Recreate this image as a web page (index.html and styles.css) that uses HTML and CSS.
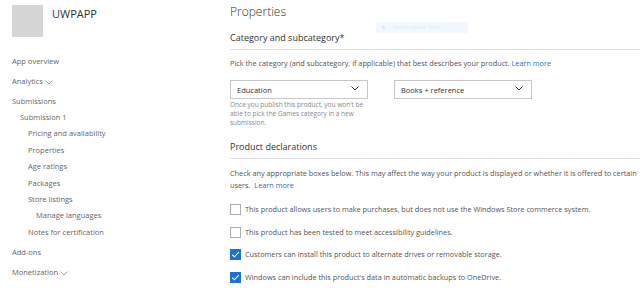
FILE: index.html
```html
<!DOCTYPE html>
<html>
<head>
<meta charset="utf-8">
<link rel="stylesheet" href="styles.css">
</head>
<body>
<div class="page">
  <aside class="sidebar">
    <div class="app-head">
      <div class="app-logo"></div>
      <div class="app-name">UWPAPP</div>
    </div>
    <nav class="nav">
      <div class="nav-top">App overview</div>
      <div class="nav-top">Analytics <span class="chev"><svg width="8" height="5" viewBox="0 0 8 5"><path d="M0.5 0.5 L4 4 L7.5 0.5" fill="none" stroke="#888" stroke-width="0.8"/></svg></span></div>
      <div class="nav-top">Submissions</div>
      <div class="nav-sub l1">Submission 1</div>
      <div class="nav-sub l2">Pricing and availability</div>
      <div class="nav-sub l2">Properties</div>
      <div class="nav-sub l2">Age ratings</div>
      <div class="nav-sub l2">Packages</div>
      <div class="nav-sub l2">Store listings</div>
      <div class="nav-sub l3">Manage languages</div>
      <div class="nav-sub l2">Notes for certification</div>
      <div class="nav-top">Add-ons</div>
      <div class="nav-top">Monetization <span class="chev"><svg width="8" height="5" viewBox="0 0 8 5"><path d="M0.5 0.5 L4 4 L7.5 0.5" fill="none" stroke="#888" stroke-width="0.8"/></svg></span></div>
    </nav>
  </aside>
  <main class="main">
    <div class="title-row">
      <h1 class="title">Properties</h1>
      <div class="snip"><span class="snip-dot"></span>Rectangular Snip</div>
    </div>
    <h2 class="section">Category and subcategory*</h2>
    <p class="desc">Pick the category (and subcategory, if applicable) that best describes your product. <a class="link">Learn more</a></p>
    <div class="selects">
      <div class="select-col">
        <div class="select"><span>Education</span><svg class="sel-chev" width="8" height="5" viewBox="0 0 8 5"><path d="M0.5 0.5 L4 4 L7.5 0.5" fill="none" stroke="#333" stroke-width="1"/></svg></div>
        <p class="helper">Once you publish this product, you won't be able to pick the Games category in a new submission.</p>
      </div>
      <div class="select-col">
        <div class="select"><span>Books + reference</span><svg class="sel-chev" width="8" height="5" viewBox="0 0 8 5"><path d="M0.5 0.5 L4 4 L7.5 0.5" fill="none" stroke="#333" stroke-width="1"/></svg></div>
      </div>
    </div>
    <h2 class="section s2">Product declarations</h2>
    <p class="desc d2">Check any appropriate boxes below. This may affect the way your product is displayed or whether it is offered to certain users. <a class="link gap">Learn more</a></p>
    <div class="checks">
      <label class="check"><span class="box"></span>This product allows users to make purchases, but does not use the Windows Store commerce system.</label>
      <label class="check"><span class="box"></span>This product has been tested to meet accessibility guidelines.</label>
      <label class="check"><span class="box on"><svg width="11" height="11" viewBox="0 0 11 11"><path d="M2.2 5.6 L4.4 7.8 L8.8 3.2" fill="none" stroke="#fff" stroke-width="1.1"/></svg></span>Customers can install this product to alternate drives or removable storage.</label>
      <label class="check"><span class="box on"><svg width="11" height="11" viewBox="0 0 11 11"><path d="M2.2 5.6 L4.4 7.8 L8.8 3.2" fill="none" stroke="#fff" stroke-width="1.1"/></svg></span>Windows can include this product's data in automatic backups to OneDrive.</label>
    </div>
  </main>
</div>
</body>
</html>
```
FILE: styles.css
```css
html, body {
  margin: 0;
  padding: 0;
  background: #fff;
  overflow: hidden;
}
body {
  font-family: "Open Sans", "Noto Sans", sans-serif;
  color: #333;
  width: 640px;
  height: 290px;
}
.page {
  display: flex;
  width: 640px;
  height: 290px;
}
.sidebar {
  width: 218px;
  flex: none;
  padding-left: 12px;
}
.app-head {
  display: flex;
  align-items: flex-start;
  padding-top: 5px;
}
.app-logo {
  width: 31px;
  height: 32px;
  background: #d6d6d6;
}
.app-name {
  margin-left: 9px;
  margin-top: 1px;
  font-size: 11px;
  color: #333;
}
.nav {
  display: flex;
  flex-direction: column;
  margin-top: 14px;
  font-size: 7.5px;
  color: #666;
}
.nav-top {
  height: 20px;
  line-height: 20px;
}
.nav-sub {
  height: 16.4px;
  line-height: 16.4px;
}
.nav-sub.l1 { padding-left: 8px; margin-top: -2px; }
.nav-sub.l2 { padding-left: 16px; }
.nav-sub.l3 { padding-left: 24px; }
.nav-sub + .nav-top { margin-top: 2px; }
.chev svg { vertical-align: middle; }
.main {
  flex: 1;
  min-width: 0;
  overflow: hidden;
  white-space: nowrap;
}
.title-row {
  display: flex;
  align-items: flex-start;
  height: 30px;
}
.title {
  margin: 3px 0 0 0;
  font-size: 12px;
  font-weight: 300;
  color: #333;
  line-height: 17px;
}
.snip {
  margin: 22px 0 0 90px;
  width: 86px;
  height: 11px;
  padding-left: 6px;
  background: #f2f8fd;
  color: #e3ecf3;
  font-size: 6px;
  line-height: 11px;
  display: flex;
  align-items: center;
}
.snip-dot {
  width: 3px;
  height: 3px;
  background: #dde8f2;
  margin-right: 8px;
}
.section {
  margin: 0;
  font-size: 9px;
  font-weight: 400;
  color: #333;
  line-height: 16px;
  padding-bottom: 3px;
  border-bottom: 1px solid #e0e0e0;
}
.desc {
  margin: 8px 0 0 0;
  font-size: 7.3px;
  line-height: 11px;
  color: #555;
}
.link {
  color: #2a6fd0;
}
.link.gap {
  margin-left: 2px;
}
.selects {
  display: flex;
  margin-top: 11px;
  gap: 26px;
}
.select-col {
  width: 138px;
}
.select {
  box-sizing: border-box;
  height: 19px;
  border: 1px solid #c8c8c8;
  display: flex;
  align-items: center;
  justify-content: space-between;
  padding: 0 8px 0 6px;
  font-size: 7.5px;
  color: #333;
}
.sel-chev { margin-top: -2px; }
.helper {
  margin: 1px 0 0 0;
  white-space: normal;
  font-size: 6.5px;
  line-height: 9px;
  color: #8a8a8a;
}
.section.s2 {
  margin-top: 12px;
}
.desc.d2 {
  white-space: normal;
  width: 410px;
  margin-top: 9px;
  line-height: 11.5px;
}
.checks {
  display: flex;
  flex-direction: column;
  margin-top: 13px;
  gap: 11px;
}
.check {
  display: flex;
  align-items: center;
  font-size: 7.3px;
  line-height: 11.5px;
  color: #555;
}
.box {
  box-sizing: border-box;
  width: 11px;
  height: 11px;
  border: 1px solid #b0b0b0;
  margin-right: 4px;
  flex: none;
  display: flex;
}
.box.on {
  background: #1a73d8;
  border-color: #1a73d8;
}
.box.on svg { margin: -1px; }
```
